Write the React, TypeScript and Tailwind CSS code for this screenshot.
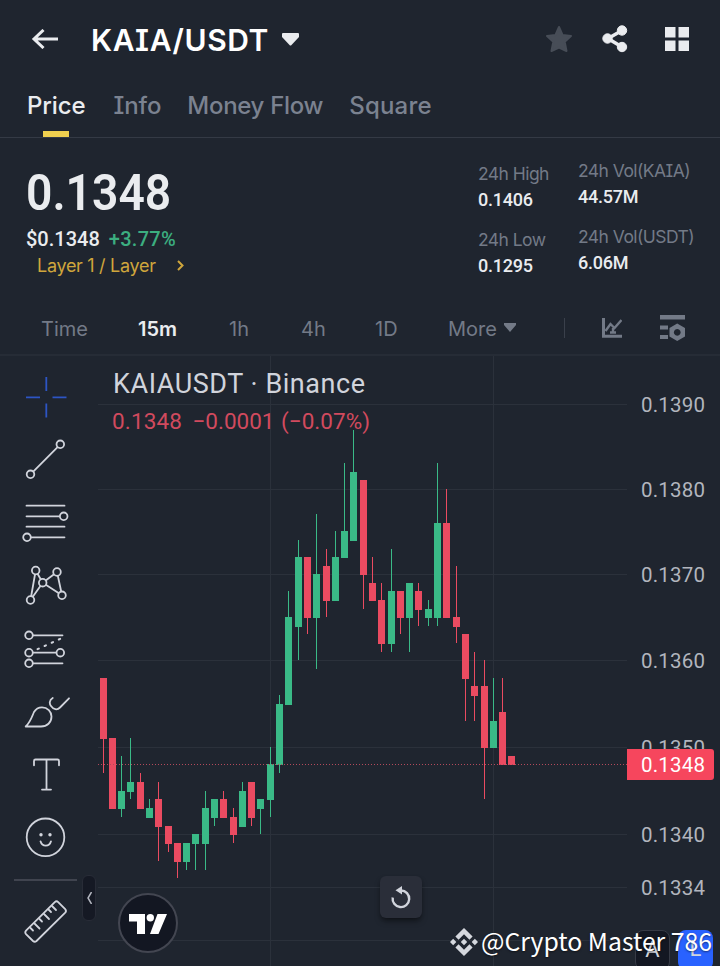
import { ReactNode } from "react";

// x, high, top, bottom, low, up
type Candle = [number, number, number, number, number, boolean];

const candles: Candle[] = [
  [100, 678, 678, 739, 773, false],
  [109, 738, 738, 809, 809, false],
  [118, 756, 791, 809, 817, true],
  [127, 738, 782, 792, 799, true],
  [137, 773, 782, 809, 809, false],
  [146, 799, 808, 818, 818, true],
  [155, 782, 799, 827, 861, false],
  [165, 826, 826, 844, 852, false],
  [174, 843, 843, 862, 878, false],
  [183, 843, 843, 862, 870, true],
  [192, 834, 834, 844, 870, true],
  [202, 791, 808, 844, 870, true],
  [211, 799, 799, 818, 826, true],
  [220, 791, 799, 818, 818, false],
  [230, 808, 817, 835, 843, false],
  [239, 782, 791, 827, 827, true],
  [248, 782, 782, 818, 826, false],
  [257, 799, 799, 809, 834, true],
  [267, 747, 764, 800, 817, true],
  [276, 695, 704, 765, 773, true],
  [285, 591, 617, 705, 705, true],
  [295, 540, 557, 627, 660, true],
  [304, 557, 557, 618, 634, false],
  [313, 514, 574, 618, 669, true],
  [323, 549, 566, 601, 617, false],
  [332, 531, 557, 601, 601, true],
  [341, 463, 531, 558, 558, true],
  [350, 430, 472, 541, 541, true],
  [360, 480, 480, 575, 609, false],
  [369, 557, 583, 601, 601, false],
  [378, 583, 600, 644, 652, false],
  [388, 549, 591, 644, 652, true],
  [397, 591, 591, 618, 634, false],
  [406, 583, 583, 618, 652, true],
  [415, 583, 591, 610, 626, false],
  [425, 600, 609, 618, 626, true],
  [434, 463, 523, 618, 626, true],
  [443, 489, 523, 618, 618, false],
  [453, 566, 617, 627, 643, false],
  [462, 634, 634, 679, 721, false],
  [471, 652, 686, 696, 721, false],
  [481, 660, 686, 748, 799, false],
  [490, 678, 721, 748, 748, true],
  [499, 678, 712, 765, 765, false],
  [508, 756, 756, 765, 765, false],
];

const axis: [string, number][] = [
  ["0.1390", 404],
  ["0.1380", 489],
  ["0.1370", 574],
  ["0.1360", 660],
  ["0.1350", 747],
  ["0.1340", 834],
  ["0.1334", 887],
];

const Tool = ({ children }: { children: ReactNode }) => (
  <svg
    className="w-12 h-[63px] text-[#d1d4dc]"
    viewBox="0 0 48 63"
    fill="none"
    stroke="currentColor"
    strokeWidth="1.8"
    strokeLinecap="round"
    strokeLinejoin="round"
  >
    {children}
  </svg>
);

const Dot = ({ x, y }: { x: number; y: number }) => (
  <circle cx={x} cy={y} r="3.8" fill="#1f252f" />
);

const Toolbar = () => (
  <div className="flex flex-col w-[98px] shrink-0 pt-2.5 pl-[22px]">
    <Tool>
      <path stroke="#2d55c4" strokeLinecap="butt" d="M24.3 11v14M24.3 37.5v14M4 31.3h14M30.5 31.3h14" />
    </Tool>
    <Tool>
      <path d="M38.3 15.3 8.5 45.3" />
      <Dot x={38.3} y={15.3} />
      <Dot x={8.5} y={45.3} />
    </Tool>
    <Tool>
      <path d="M4.5 13.7h38M4.5 24.3h37M4.5 34.7h38M5 45.3h37.5" />
      <Dot x={41.7} y={24.3} />
      <Dot x={5} y={45.3} />
    </Tool>
    <Tool>
      <path d="M8.5 45 13.7 15.5 20.7 27.7ZM20.7 27.7 35 17 40 40.3Z" />
      <Dot x={13.7} y={15.5} />
      <Dot x={35} y={17} />
      <Dot x={20.7} y={27.7} />
      <Dot x={40} y={40.3} />
      <Dot x={8.5} y={45} />
    </Tool>
    <Tool>
      <path d="M7 17.3h33.5M7 34.7h31M7 45.3h33.5" />
      <path strokeDasharray="1.5 6.3" strokeWidth="2" d="M15.5 31.2 39 20.5" />
      <Dot x={7} y={17.3} />
      <Dot x={7} y={34.7} />
      <Dot x={38.3} y={34.7} />
      <Dot x={7} y={45.3} />
    </Tool>
    <Tool>
      <path d="M3.7 45.5C8.500 41 10 35.5 12 31C14 27.5 17 26.3 20 26.3C25.5 26.3 29.5 30.5 29.5 35.5C29.5 41.5 25 45.5 19 45.5Z" />
      <path d="M30.7 17C27 19 27.3 23 29 25C31.5 28.5 35 29.5 38 26.5L47 17.3" />
    </Tool>
    <Tool>
      <path d="M12 21.3V17C12 16 12.5 15.5 13.5 15.5H35.5C36.5 15.5 37 16 37 17V21.3M24.5 15.5V45.6M20 45.6h9" />
    </Tool>
    <Tool>
      <circle cx="23.5" cy="30.3" r="18.8" />
      <circle cx="19" cy="27.7" r="1.7" fill="currentColor" stroke="none" />
      <circle cx="28" cy="27.7" r="1.7" fill="currentColor" stroke="none" />
      <path d="M18.5 34.3C20 40 27.5 40 29 34.3" />
    </Tool>
    <div className="mt-[9px] -ml-2 w-[63px] h-0.5 bg-[#40444f]" />
    <svg className="mt-4 w-12 h-12" viewBox="22 897.5 48 48" fill="none" stroke="#d1d4dc" strokeWidth="1.8" strokeLinejoin="round" strokeLinecap="round">
      <path d="M54.8 902.6Q56.5 901 58.2 902.6L65.2 909.6Q66.8 911.5 65.2 913.2L36.5 941.5Q34.7 943 33 941.5L26 934.7Q24.5 933 26 931.2Z" />
      <path d="m30.5 928.5 2.5 2.5M34.5 924l5 5M39.5 919.5l2.5 2.5M44 914.5l5 5M48.5 910l2.5 2.5M52 906.5l4 4" />
    </svg>
  </div>
);

const Chart = () => (
  <svg className="w-[622px] h-[610px] shrink-0" viewBox="98 356 622 610" fontFamily="Roboto, sans-serif">
    <g stroke="#2b313b" strokeWidth="1" shapeRendering="crispEdges">
      {[404, 489, 574, 660, 747, 834, 887, 940].map((y) => (
        <path key={y} d={`M98 ${y + 0.5}H627`} />
      ))}
      <path d="M270.5 356V966M493.5 356V966" />
    </g>
    {candles.map(([x, high, top, bottom, low, up]) => (
      <g key={x} fill={up ? "#3aba87" : "#ea4b61"} shapeRendering="crispEdges">
        <rect x={x + 3} y={high} width="1" height={low - high} />
        <rect x={x} y={top} width="7" height={bottom - top} />
      </g>
    ))}
    <path d="M98 764.5H627" stroke="#b34a5b" strokeDasharray="1 2" />
    <text x="113" y="393" fontSize="27" fill="#d1d4dc" textLength="252">KAIAUSDT · Binance</text>
    <g fontSize="22.5" fill="#d14a5e">
      <text x="112" y="429" textLength="70">0.1348</text>
      <text x="192.5" y="429" textLength="82">−0.0001</text>
      <text x="281" y="429" textLength="89">(−0.07%)</text>
    </g>
    <g fontSize="20.5" fill="#b2b5be">
      {axis.map(([label, y]) => (
        <text key={label} x="641" y={y + 8} textLength="64">{label}</text>
      ))}
    </g>
    <path d="M627 749h84q3 0 3 3v25q0 3-3 3h-84z" fill="#f6465d" />
    <text x="641" y="772" fontSize="20.5" fill="#fff" textLength="64">0.1348</text>
  </svg>
);

const Stat = ({ label, value }: { label: string; value: string }) => (
  <div className="h-[66px]">
    <p className="h-[26px] leading-[26px] text-[17.5px] tracking-[-0.55px] text-[#737a87] whitespace-nowrap">{label}</p>
    <p className="h-[26px] leading-[26px] text-[18px] font-medium text-[#eaecef] font-[Roboto,sans-serif] tracking-[-0.25px]">{value}</p>
  </div>
);

const Header = () => (
  <header className="flex items-center h-[78px] px-[31px]">
    <svg className="w-7 h-5" viewBox="0 0 28 20" fill="none" stroke="#eaecef" strokeWidth="3">
      <path d="M12.5 1 3 10l9.5 9M2.5 10H27" />
    </svg>
    <h1 className="ml-8 pt-0.5 text-[30px] font-semibold text-white tracking-[0.6px]">KAIA/USDT</h1>
    <svg className="ml-[13px] w-[17px] h-[13px]" viewBox="0 0 17 13" fill="#eaecef">
      <path d="M1 0H16Q17 0 17 1V4L9.5 12Q8.5 13 7.5 12L0 4V1Q0 0 1 0Z" />
    </svg>
    <div className="flex items-center ml-auto">
      <svg className="w-7 h-7" viewBox="0 0 28 28" fill="#474d57" stroke="#474d57" strokeWidth="2" strokeLinejoin="round">
        <path d="m14 2 3.5 7.9 8.5 1-6.3 5.8L21.5 26 14 22.5 6.5 26l1.8-9.3L2 10.9l8.5-1z" />
      </svg>
      <svg className="ml-[29px] w-[26px] h-7" viewBox="0 0 26 28" fill="#eaecef" stroke="#eaecef">
        <path d="M20 5.5 6 13.5l14 8.5" fill="none" strokeWidth="3.5" />
        <circle cx="20" cy="5.5" r="4.7" />
        <circle cx="5.5" cy="13.5" r="4.7" />
        <circle cx="20" cy="22" r="4.7" />
      </svg>
      <svg className="ml-[37px] w-6 h-6" viewBox="0 0 24 24" fill="#eaecef">
        <path d="M0 0h10.5v10.5H0zM13.5 0H24v10.5H13.5zM0 13.5h10.5V24H0zM13.5 13.5H24V24H13.5z" />
      </svg>
    </div>
  </header>
);

export default function App() {
  return (
    <div className="relative w-[720px] h-[966px] overflow-hidden bg-[#1f252f] font-[Inter,sans-serif] [font-feature-settings:'cv08']">
      <Header />

      <nav className="flex h-[60px] pt-[13px] pl-[27px] gap-[26px] border-b border-[#343a45] text-[24px] leading-[30px] font-medium tracking-[-0.1px] text-[#7b8290]">
        <div className="flex flex-col items-center justify-between text-[#eaecef]">
          <span>Price</span>
          <span className="w-[26px] h-1.5 bg-[#f0d04f]" />
        </div>
        <span className="ml-0.5">Info</span>
        <span className="tracking-[-0.3px]">Money Flow</span>
        <span className="tracking-[0.2px]">Square</span>
      </nav>

      <section className="flex h-[164px] pl-[26px]">
        <div className="w-[452px] pt-[30px]">
          <p className="h-[50px] leading-[50px] text-[50px] font-semibold text-[#eaecef] font-[Roboto,sans-serif] origin-left scale-x-[0.925]">0.1348</p>
          <p className="h-[28px] mt-[7px] leading-[28px] text-[20px] font-medium text-[#eaecef] font-[Roboto,sans-serif]">
            $0.1348 <span className="ml-1 tracking-[0.3px] text-[#3cae80]">+3.77%</span>
          </p>
          <p className="flex items-center h-[25px] pl-[11px] text-[18px] tracking-[-0.3px] text-[#cfa63c]">
            Layer 1 / Layer
            <svg className="ml-[21px] w-[7px] h-[11px]" viewBox="0 0 7 11" fill="none" stroke="currentColor" strokeWidth="2">
              <path d="m1 1 4.5 4.5L1 10" />
            </svg>
          </p>
        </div>
        <div className="w-[100px] pt-[23px]">
          <Stat label="24h High" value="0.1406" />
          <Stat label="24h Low" value="0.1295" />
        </div>
        <div className="pt-5">
          <Stat label="24h Vol(KAIA)" value="44.57M" />
          <Stat label="24h Vol(USDT)" value="6.06M" />
        </div>
      </section>

      <div className="flex items-center h-[54px] pt-0.5 pl-[41px] pr-[34px] border-b-2 border-[#262c36] text-[20px] text-[#737a87]">
        <span className="w-[97px]">Time</span>
        <span className="w-[91px] font-semibold text-[#eaecef]">15m</span>
        <span className="w-[72px]">1h</span>
        <span className="w-[74px]">4h</span>
        <span className="w-[73px]">1D</span>
        <span className="w-[56px]">More</span>
        <svg className="-mt-1 w-3 h-[9px]" viewBox="0 0 12 9" fill="currentColor">
          <path d="M0 0H12V2L6 9 0 2Z" />
        </svg>
        <span className="ml-[48px] -mt-0.5 w-px h-5 bg-[#3a404b]" />
        <svg className="ml-[37px] -mt-0.5 w-5 h-5" viewBox="0 0 20 20" fill="none" stroke="currentColor" strokeWidth="3">
          <path d="M1.5 0V18.3H20" />
          <path strokeWidth="2.4" d="m3.5 13 5-7 4 4 7-8M8 14.5h6M11 10v4" />
        </svg>
        <svg className="ml-auto -mt-0.5 w-[26px] h-[26px]" viewBox="0 0 26 26" fill="currentColor">
          <path d="M0 0h25v4.500H0zM0 10.500h8v4H0zM0 20h8v4H0z" />
          <path fillRule="evenodd" d="M17.2 8.5 25 13v8.500L17.200 26 9.500 21.500V13zM17.200 14a3.400 3.400 0 1 0 .1 0z" />
        </svg>
      </div>

      <main className="flex">
        <Toolbar />
        <Chart />
      </main>

      <div className="absolute left-[82px] top-[875px] flex items-center justify-center w-[14px] h-[46px] rounded-[6px] bg-[#151924] border border-[#282c37]">
        <svg className="w-[5px] h-3" viewBox="0 0 5 12" fill="none" stroke="#b2b5be" strokeWidth="1.5">
          <path d="M4.5 0 1 6l3.5 6" />
        </svg>
      </div>

      <div className="absolute left-[118px] top-[893px] flex items-center justify-center w-[60px] h-[60px] rounded-full bg-[#131722] border-2 border-[#434651]">
        <svg className="w-[38px] h-5 mt-0.5" viewBox="0 0 38 20" fill="#fff">
          <path d="M0 0H16V20H8V7.5H0zM28.5 0H38L29.5 20H21z" />
          <circle cx="21.3" cy="3.7" r="3.7" />
        </svg>
      </div>

      <div className="absolute left-[380px] top-[876px] flex items-center justify-center w-[42px] h-[42px] rounded-md bg-[#2a2e39] shadow-md shadow-black/40">
        <svg className="w-6 h-6" viewBox="0 0 24 24" fill="none" stroke="#d1d4dc" strokeWidth="2.4">
          <path d="M3.7 12.5A8.3 8.3 0 1 0 12 5.5H10" />
          <path d="M13 1v8.5L6.5 5.3z" fill="#d1d4dc" stroke="none" />
        </svg>
      </div>

      <div className="absolute left-[635px] top-[930px] flex gap-2 text-[22px] leading-[38px] text-center font-[Roboto,sans-serif] text-[#d1d4dc]">
        <span className="w-[35px] h-10 rounded-lg bg-[#131722] border border-[#363a45]">A</span>
        <span className="w-[35px] h-10 rounded-lg bg-[#2962ff]">L</span>
      </div>

      <div className="absolute left-[450px] top-[924px] flex items-center h-9 text-white">
        <svg className="w-7 h-7 shrink-0" viewBox="0 0 126.6 126.6" fill="#d5d8de">
          <path d="m38.7 53.2 24.6-24.6 24.6 24.6 14.3-14.3L63.3 0 24.4 38.9zM0 63.3 14.3 49l14.3 14.3-14.3 14.3zM38.7 73.4 63.3 98l24.6-24.6 14.3 14.3-38.9 38.9-38.9-38.9zM98 63.3 112.3 49l14.3 14.3-14.3 14.3zM77.8 63.3 63.3 48.8 48.8 63.3l14.5 14.5z" />
        </svg>
        <span className="ml-[3px] -mt-0.5 text-[24.8px] font-['Noto_Sans_CJK_SC',sans-serif] tracking-[-0.02px] whitespace-nowrap [text-shadow:0_1px_2px_rgba(0,0,0,0.5)]">@Crypto Master 786</span>
      </div>
    </div>
  );
}
